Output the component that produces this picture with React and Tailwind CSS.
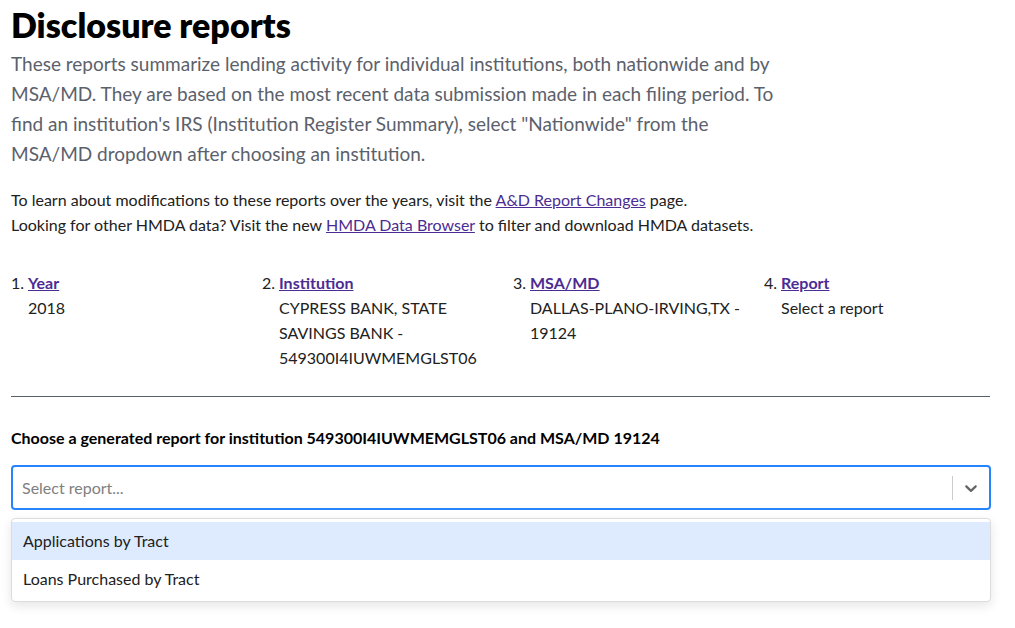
const steps = [
  { n: '1.', title: 'Year', lines: ['2018'] },
  { n: '2.', title: 'Institution', lines: ['CYPRESS BANK, STATE', 'SAVINGS BANK -', '549300I4IUWMEMGLST06'] },
  { n: '3.', title: 'MSA/MD', lines: ['DALLAS-PLANO-IRVING,TX -', '19124'] },
  { n: '4.', title: 'Report', lines: ['Select a report'] },
];

const options = ['Applications by Tract', 'Loans Purchased by Tract'];

const Chevron = () => (
  <svg viewBox="0 0 20 20" width="20" height="20" fill="#666666" aria-hidden="true">
    <path d="M4.516 7.548c0.436-0.446 1.043-0.481 1.576 0l3.908 3.747 3.908-3.747c0.533-0.481 1.141-0.446 1.574 0 0.436 0.445 0.408 1.197 0 1.615-0.406 0.418-4.695 4.502-4.695 4.502-0.217 0.223-0.502 0.335-0.787 0.335s-0.57-0.112-0.789-0.335c0 0-4.287-4.084-4.695-4.502s-0.436-1.17 0-1.615z" />
  </svg>
);

export default function App() {
  return (
    <div className="min-h-screen bg-white pl-[11px] pr-[24px] text-[#212121]" style={{ fontFamily: 'Lato, "Noto Sans", sans-serif' }}>
      <h1 className="pt-[7px] text-[34px] font-extrabold leading-[36px] text-black">Disclosure reports</h1>

      <p className="mt-[6px] text-[19px] leading-[30px] text-[#5b616b]">
        These reports summarize lending activity for individual institutions, both nationwide and by<br />
        MSA/MD. They are based on the most recent data submission made in each filing period. To<br />
        find an institution's IRS (Institution Register Summary), select "Nationwide" from the<br />
        MSA/MD dropdown after choosing an institution.
      </p>

      <div className="mt-[18px] text-[16px] leading-[25px]">
        <p>
          To learn about modifications to these reports over the years, visit the{' '}
          <a href="#" className="text-[#4c2c92] underline">A&amp;D Report Changes</a> page.
        </p>
        <p>
          Looking for other HMDA data? Visit the new{' '}
          <a href="#" className="text-[#4c2c92] underline">HMDA Data Browser</a> to filter and download HMDA datasets.
        </p>
      </div>

      <div className="mt-[33px] flex text-[16px] leading-[25px]">
        {steps.map(step => (
          <div key={step.n} className="flex w-[251px] shrink-0">
            <span className="w-[17px] shrink-0">{step.n}</span>
            <div>
              <a href="#" className="font-bold text-[#4c2c92] underline">{step.title}</a>
              {step.lines.map(line => (
                <div key={line}>{line}</div>
              ))}
            </div>
          </div>
        ))}
      </div>

      <hr className="mt-[26px] w-[979px] border-0 border-t border-[#5b616b]" />

      <p className="mt-[31px] text-[16px] font-bold leading-[20px] text-black">
        Choose a generated report for institution 549300I4IUWMEMGLST06 and MSA/MD 19124
      </p>

      <div className="mt-[17px] w-[980px]">
        <div className="flex h-[45px] items-center rounded-[4px] border-2 border-[#2684ff]">
          <span className="flex-1 pl-[9px] text-[16px] text-[#808080]">Select report...</span>
          <span className="h-[24px] w-px bg-[#cccccc]"></span>
          <span className="flex w-[36px] items-center justify-center">
            <Chevron />
          </span>
        </div>

        <div className="mt-[8px] rounded-[4px] border border-[#dcdcdc] bg-white py-[3px] shadow-[0_4px_11px_rgba(0,0,0,0.1)]">
          {options.map((opt, i) => (
            <div
              key={opt}
              className={i === 0 ? 'h-[38px] bg-[#deebff] px-[11px] text-[16px] leading-[38px]' : 'h-[38px] px-[11px] text-[16px] leading-[38px]'}
            >
              {opt}
            </div>
          ))}
        </div>
      </div>
    </div>
  );
}
